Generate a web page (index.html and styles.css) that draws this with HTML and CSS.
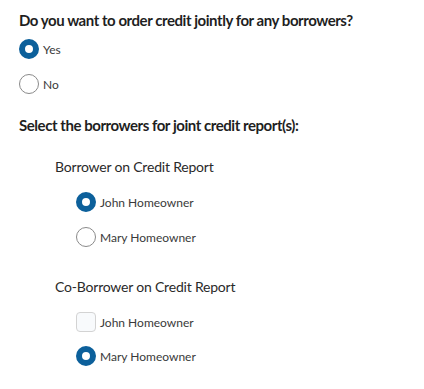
FILE: index.html
```html
<!DOCTYPE html>
<html lang="en">
  <head>
    <meta charset="utf-8" />
    <title>Joint credit</title>
    <link rel="stylesheet" href="styles.css">
  </head>
  <body>
    <div class="form">
      <h1 class="question">Do you want to order credit jointly for any borrowers?</h1>
      <div class="choices">
        <label class="choice"><span class="radio checked"></span>Yes</label>
        <label class="choice"><span class="radio"></span>No</label>
      </div>

      <h1 class="question select">Select the borrowers for joint credit report(s):</h1>

      <div class="group">
        <h2 class="group-title">Borrower on Credit Report</h2>
        <div class="choices sub">
          <label class="choice"><span class="radio checked"></span>John Homeowner</label>
          <label class="choice"><span class="radio"></span>Mary Homeowner</label>
        </div>
      </div>

      <div class="group co">
        <h2 class="group-title">Co-Borrower on Credit Report</h2>
        <div class="choices sub">
          <label class="choice"><span class="box"></span>John Homeowner</label>
          <label class="choice"><span class="radio checked"></span>Mary Homeowner</label>
        </div>
      </div>
    </div>
  </body>
</html>
```

FILE: styles.css
```css
* {
  margin: 0;
  padding: 0;
  box-sizing: border-box;
}

body {
  font-family: "Source Sans Pro", Lato, "Liberation Sans", sans-serif;
  color: #333;
  background: #fff;
}

.form {
  padding: 10px 19px 0 19px;
}

.question {
  font-size: 15px;
  line-height: 20px;
  font-weight: 700;
  letter-spacing: -0.45px;
  color: #1f1f1f;
}

.question.select {
  margin-top: 21px;
}

.choices {
  display: flex;
  flex-direction: column;
  gap: 15px;
  margin-top: 9px;
}

.choice {
  display: flex;
  align-items: center;
  height: 20px;
  font-size: 12px;
  color: #3a3a3a;
}

.radio,
.box {
  width: 20px;
  height: 20px;
  margin-right: 4px;
  flex: none;
}

.radio {
  border: 1px solid #8a8a8a;
  border-radius: 50%;
  background: #fff;
}

.radio.checked {
  border: 6px solid #0c609b;
}

.box {
  border: 1px solid #d3d3d3;
  border-radius: 4px;
  background: #f8fafc;
}

.group {
  margin-top: 22px;
  padding-left: 36px;
}

.group.co {
  margin-top: 30px;
}

.group-title {
  font-size: 14px;
  line-height: 20px;
  font-weight: 400;
  letter-spacing: -0.2px;
  color: #2a2a2a;
}

.choices.sub {
  margin-top: 15px;
  padding-left: 21px;
}

.co .choices.sub {
  margin-top: 15px;
  gap: 14px;
}
```
